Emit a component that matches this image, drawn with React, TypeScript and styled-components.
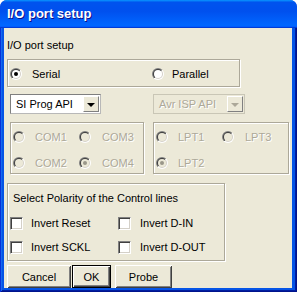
import React from "react";
import styled, { createGlobalStyle, css } from "styled-components";

const Global = createGlobalStyle`
  html, body { margin: 0; padding: 0; background: #ffffff; }
  body { font-family: "Liberation Sans", Arial, sans-serif; }
`;

const Window = styled.div`
  width: 297px;
  height: 292px;
  display: flex;
  flex-direction: column;
  background: #0842d9;
  border-radius: 7px 7px 0 0;
  overflow: hidden;
`;

const TitleBar = styled.div`
  height: 28px;
  flex: none;
  display: flex;
  align-items: center;
  padding: 0 0 1px 7px;
  box-sizing: border-box;
  background: linear-gradient(180deg, #0997ff, #0053ee 8%, #0050ee 40%, #0066ff 88%, #0066ff 93%, #005bff 95%, #003dd7 96%, #003dd7);
  color: #fff;
  font-family: "Liberation Sans", Arial, sans-serif;
  font-weight: bold;
  font-size: 13px;
  text-shadow: 1px 1px #0f1089;
`;

const Frame = styled.div`
  flex: 1;
  display: flex;
  padding: 0 5px 4px 4px;
  background: #0554e6;
  box-shadow: inset 1px 0 #0831d9, inset -1px -1px #00138c, inset 2px 0 #166aee, inset -2px -2px #001ea0;
`;

const Client = styled.div`
  flex: 1;
  background: #ece9d8;
  display: flex;
  flex-direction: column;
  padding: 11px 0 0 3px;
  font-family: "Liberation Sans", Arial, sans-serif;
  font-size: 11px;
  color: #000;
  line-height: 13px;
`;

const Heading = styled.div`
  height: 13px;
  margin-bottom: 7px;
`;

const etched = css`
  box-sizing: border-box;
  border: 1px solid #aca899;
  box-shadow: inset 1px 1px #fff, 1px 1px #fff;
`;

const PortBox = styled.div`
  ${etched};
  width: 233px;
  height: 28px;
  display: grid;
  grid-template-columns: 142px auto;
  align-items: center;
  padding: 2px 0 0 1px;
`;

const ComboRow = styled.div`
  display: flex;
  margin: 7px 0 0 3px;
  gap: 52px;
`;

const Combo = styled.div<{ $disabled?: boolean; $w: number }>`
  box-sizing: border-box;
  width: ${(p) => p.$w}px;
  height: 20px;
  display: flex;
  align-items: center;
  border: 1px solid ${(p) => (p.$disabled ? "#c9c6b6" : "#7f7f7f")};
  border-right-color: ${(p) => (p.$disabled ? "#c9c6b6" : "#b8b8b8")};
  border-bottom-color: ${(p) => (p.$disabled ? "#c9c6b6" : "#b8b8b8")};
  background: ${(p) => (p.$disabled ? "#ece9d8" : "#fff")};
  padding: 1px;
  color: ${(p) => (p.$disabled ? "#aca899" : "#000")};
  ${(p) => p.$disabled && "text-shadow: 1px 1px #fff;"}
`;

const ComboText = styled.span`
  flex: 1;
  padding-left: 4px;
  white-space: nowrap;
  overflow: hidden;
`;

const ComboArrow = styled.span<{ $disabled?: boolean }>`
  box-sizing: border-box;
  width: 16px;
  height: 16px;
  display: flex;
  align-items: center;
  justify-content: center;
  background: #ece9d8;
  border: 1px solid;
  border-color: #fff #808080 #808080 #fff;
  &::after {
    content: "";
    width: 0;
    height: 0;
    border-left: 4px solid transparent;
    border-right: 4px solid transparent;
    border-top: 4px solid ${(p) => (p.$disabled ? "#aca899" : "#000")};
    margin-top: 1px;
  }
`;

const BoxRow = styled.div`
  display: flex;
  margin: 8px 0 0 3px;
  gap: 9px;
`;

const ChoiceBox = styled.div<{ $w: number; $cols: string }>`
  ${etched};
  width: ${(p) => p.$w}px;
  height: 52px;
  display: grid;
  grid-template-columns: ${(p) => p.$cols};
  grid-template-rows: 26px 26px;
  grid-auto-flow: column;
  align-items: center;
  padding: 1px 0 0 1px;
`;

const Option = styled.label<{ $gap?: number; $disabled?: boolean }>`
  display: flex;
  align-items: center;
  gap: ${(p) => p.$gap ?? 10}px;
  padding-left: 1px;
  white-space: nowrap;
  color: ${(p) => (p.$disabled ? "#aca899" : "#000")};
  ${(p) => p.$disabled && "text-shadow: 1px 1px #fff;"}
`;

const RadioOuter = styled.span`
  position: relative;
  flex: none;
  width: 12px;
  height: 12px;
  border-radius: 50%;
  background: linear-gradient(135deg, #808080 50%, #ffffff 50%);
`;

const RadioInner = styled.span`
  position: absolute;
  inset: 1px;
  border-radius: 50%;
  background: linear-gradient(135deg, #404040 50%, #d4d0c8 50%);
`;

const RadioFace = styled.span<{ $checked?: boolean; $disabled?: boolean }>`
  position: absolute;
  inset: 2px;
  border-radius: 50%;
  background: ${(p) => (p.$disabled ? "#ece9d8" : "#fff")};
  &::after {
    content: "";
    display: ${(p) => (p.$checked ? "block" : "none")};
    position: absolute;
    inset: 2px;
    border-radius: 50%;
    background: ${(p) => (p.$disabled ? "#9a978a" : "#000")};
  }
`;

const PolarityBox = styled.div`
  ${etched};
  width: 218px;
  height: 78px;
  margin-top: 9px;
  display: grid;
  grid-template-columns: 108px auto;
  grid-template-rows: 27px 24px 24px;
  align-items: center;
  padding: 0 0 0 1px;
`;

const PolarityTitle = styled.div`
  grid-column: 1 / 3;
  padding-left: 4px;
  margin-top: 1px;
`;

const CheckBox = styled.span`
  flex: none;
  box-sizing: border-box;
  width: 13px;
  height: 13px;
  background: #fff;
  border: 1px solid;
  border-color: #808080 #fff #fff #808080;
  box-shadow: inset 1px 1px #404040, inset -1px -1px #d4d0c8;
`;

const ButtonRow = styled.div`
  display: flex;
  margin-top: 4px;
`;

const Button = styled.button<{ $w: number; $default?: boolean; $ml?: number }>`
  box-sizing: border-box;
  width: ${(p) => p.$w}px;
  height: 23px;
  margin: 0 0 0 ${(p) => p.$ml ?? 0}px;
  padding: 0;
  background: #ece9d8;
  font-family: "Liberation Sans", Arial, sans-serif;
  font-size: 11px;
  color: #000;
  border: 1px solid ${(p) => (p.$default ? "#000" : "transparent")};
  box-shadow: ${(p) =>
    p.$default
      ? "inset 1px 1px #fff, inset -1px -1px #404040, inset -2px -2px #808080"
      : "inset 1px 1px #fff, inset -1px -1px #404040, inset -2px -2px #808080"};
  ${(p) =>
    !p.$default &&
    "border: none; box-shadow: inset 1px 1px #fff, inset -1px -1px #404040, inset 2px 2px #ece9d8, inset -2px -2px #808080;"}
`;

function Radio({ checked, disabled }: { checked?: boolean; disabled?: boolean }) {
  return (
    <RadioOuter>
      <RadioInner />
      <RadioFace $checked={checked} $disabled={disabled} />
    </RadioOuter>
  );
}

export default function App() {
  return (
    <>
      <Global />
      <Window>
        <TitleBar>I/O port setup</TitleBar>
        <Frame>
          <Client>
            <Heading>I/O port setup</Heading>
            <PortBox>
              <Option $gap={10}>
                <Radio checked />
                Serial
              </Option>
              <Option $gap={8}>
                <Radio />
                Parallel
              </Option>
            </PortBox>
            <ComboRow>
              <Combo $w={91}>
                <ComboText>SI Prog API</ComboText>
                <ComboArrow />
              </Combo>
              <Combo $w={92} $disabled>
                <ComboText>Avr ISP API</ComboText>
                <ComboArrow $disabled />
              </Combo>
            </ComboRow>
            <BoxRow>
              <ChoiceBox $w={134} $cols="66px auto">
                <Option $disabled $gap={10}>
                  <Radio disabled />
                  COM1
                </Option>
                <Option $disabled $gap={10}>
                  <Radio disabled />
                  COM2
                </Option>
                <Option $disabled $gap={11}>
                  <Radio disabled />
                  COM3
                </Option>
                <Option $disabled $gap={11}>
                  <Radio disabled checked />
                  COM4
                </Option>
              </ChoiceBox>
              <ChoiceBox $w={136} $cols="66px auto">
                <Option $disabled $gap={10}>
                  <Radio disabled />
                  LPT1
                </Option>
                <Option $disabled $gap={10}>
                  <Radio disabled checked />
                  LPT2
                </Option>
                <Option $disabled $gap={11}>
                  <Radio disabled />
                  LPT3
                </Option>
              </ChoiceBox>
            </BoxRow>
            <PolarityBox>
              <PolarityTitle>Select Polarity of the Control lines</PolarityTitle>
              <Option $gap={8}>
                <CheckBox />
                Invert Reset
              </Option>
              <Option $gap={9}>
                <CheckBox />
                Invert D-IN
              </Option>
              <Option $gap={8}>
                <CheckBox />
                Invert SCKL
              </Option>
              <Option $gap={9}>
                <CheckBox />
                Invert D-OUT
              </Option>
            </PolarityBox>
            <ButtonRow>
              <Button $w={64}>Cancel</Button>
              <Button $w={39} $ml={1} $default>
                OK
              </Button>
              <Button $w={57} $ml={4}>
                Probe
              </Button>
            </ButtonRow>
          </Client>
        </Frame>
      </Window>
    </>
  );
}
